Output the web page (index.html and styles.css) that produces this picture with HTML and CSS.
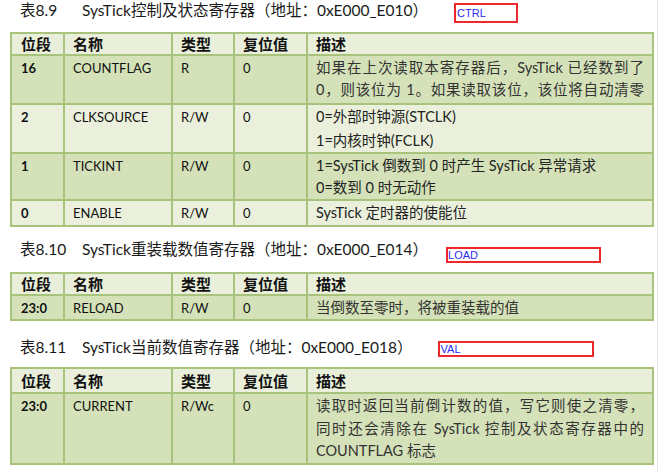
FILE: index.html
```html
<!DOCTYPE html>
<html lang="zh">
<head>
<meta charset="utf-8">
<link rel="stylesheet" href="styles.css">
</head>
<body>
<div class="page">
  <div class="title t1">
    <span class="num">表8.9</span>
    <span class="ttext">SysTick控制及状态寄存器（地址：0xE000_E010）</span>
    <span class="tag tag-ctrl">CTRL</span>
  </div>
  <table class="reg r1">
    <colgroup><col class="c1"><col class="c2"><col class="c3"><col class="c4"><col class="c5"></colgroup>
    <tr class="head"><th>位段</th><th>名称</th><th>类型</th><th>复位值</th><th>描述</th></tr>
    <tr class="dark h48"><td class="bit">16</td><td>COUNTFLAG</td><td>R</td><td>0</td>
      <td class="desc serif"><span class="ln just">如果在上次读取本寄存器后，SysTick 已经数到了</span><span class="ln just">0，则该位为 1。如果读取该位，该位将自动清零</span></td></tr>
    <tr class="light h47"><td class="bit">2</td><td>CLKSOURCE</td><td>R/W</td><td>0</td>
      <td class="desc wide"><span class="ln">0=外部时钟源(STCLK)</span><span class="ln">1=内核时钟(FCLK)</span></td></tr>
    <tr class="dark h49"><td class="bit">1</td><td>TICKINT</td><td>R/W</td><td>0</td>
      <td class="desc"><span class="ln">1=SysTick 倒数到 0 时产生 SysTick 异常请求</span><span class="ln">0=数到 0 时无动作</span></td></tr>
    <tr class="light h26"><td class="bit">0</td><td>ENABLE</td><td>R/W</td><td>0</td>
      <td class="desc"><span class="ln">SysTick 定时器的使能位</span></td></tr>
  </table>

  <div class="title t2">
    <span class="num">表8.10</span>
    <span class="ttext">SysTick重装载数值寄存器（地址：0xE000_E014）</span>
    <span class="tag tag-load">LOAD</span>
  </div>
  <table class="reg r2">
    <colgroup><col class="c1"><col class="c2"><col class="c3"><col class="c4"><col class="c5"></colgroup>
    <tr class="head"><th>位段</th><th>名称</th><th>类型</th><th>复位值</th><th>描述</th></tr>
    <tr class="dark h25"><td class="bit">23:0</td><td>RELOAD</td><td>R/W</td><td>0</td>
      <td class="desc serif"><span class="ln">当倒数至零时，将被重装载的值</span></td></tr>
  </table>

  <div class="title t3">
    <span class="num">表8.11</span>
    <span class="ttext">SysTick当前数值寄存器（地址：0xE000_E018）</span>
    <span class="tag tag-val">VAL</span>
  </div>
  <table class="reg r3">
    <colgroup><col class="c1"><col class="c2"><col class="c3"><col class="c4"><col class="c5"></colgroup>
    <tr class="head"><th>位段</th><th>名称</th><th>类型</th><th>复位值</th><th>描述</th></tr>
    <tr class="dark h72"><td class="bit">23:0</td><td>CURRENT</td><td>R/Wc</td><td>0</td>
      <td class="desc serif tall"><span class="ln just">读取时返回当前倒计数的值，写它则使之清零，</span><span class="ln just">同时还会清除在 SysTick 控制及状态寄存器中的</span><span class="ln">COUNTFLAG 标志</span></td></tr>
  </table>
</div>
</body>
</html>
```
FILE: styles.css
```css
html, body {
  margin: 0;
  padding: 0;
  background: #ffffff;
}
body {
  font-family: "Lato", "Noto Sans CJK SC", sans-serif;
  color: #111;
}
.page {
  width: 647px;
  height: 471px;
  padding-left: 10px;
  border-right: 1px solid #e2e2e2;
  overflow: hidden;
}
.title {
  display: flex;
  align-items: flex-start;
  height: 20px;
  padding-left: 10px;
  font-size: 15.5px;
  line-height: 20px;
  color: #1a1a1a;
  white-space: nowrap;
}
.t1 { margin-top: 0; }
.t2 { margin-top: 12px; }
.t3 { margin-top: 16px; }
.num { width: 62px; flex: none; }
.tag {
  box-sizing: border-box;
  border: 2px solid #ec2a2e;
  font-family: "Liberation Sans", Arial, sans-serif;
  font-size: 11px;
  color: #2b2bf2;
  flex: none;
}
.tag-ctrl {
  width: 64px;
  height: 20px;
  margin-top: 3px;
  margin-left: 26px;
  padding: 1px 0 0 1px;
  line-height: 14px;
}
.tag-load {
  width: 155px;
  height: 16px;
  margin-top: 8px;
  margin-left: 18px;
  line-height: 13px;
}
.tag-val {
  width: 156px;
  height: 16px;
  margin-top: 4px;
  margin-left: 25px;
  line-height: 13px;
  padding-left: 1px;
}
.reg {
  border-collapse: collapse;
  table-layout: fixed;
  width: 642px;
  border: 2px solid #a7c37c;
  font-size: 13px;
}
.r1 { margin-top: 12px; }
.r2 { margin-top: 13px; }
.r3 { margin-top: 10px; }
.c1 { width: 53px; }
.c2 { width: 108px; }
.c3 { width: 62px; }
.c4 { width: 73px; }
.c5 { width: 346px; }
.reg th, .reg td {
  border: 2px solid #a7c37c;
  text-align: left;
  padding: 0 8px;
}
.reg th {
  height: 20px;
  font-family: "Noto Sans CJK SC", sans-serif;
  font-weight: 700;
  font-size: 15px;
  line-height: 20px;
  vertical-align: middle;
  background: #e9efda;
}
.r2 th { height: 20px; }
.r3 th { height: 23px; }
.reg th:first-child, .reg td:first-child { padding-left: 9px; }
.reg td {
  vertical-align: top;
  padding-top: 1px;
  line-height: 22px;
}
.dark td { background: #d5e2b9; }
.light td { background: #eaf0dc; }
.h48 td { height: 46px; }
.h47 td { height: 44px; }
.h49 td { height: 43px; }
.h26 td { height: 23px; }
.h25 td { height: 21px; }
.h72 td { height: 68px; }
.bit { font-weight: 700; }
.desc {
  font-size: 14.5px;
  color: #222;
  white-space: nowrap;
}
.desc.serif { color: #333; font-size: 14.5px; }
.ln { display: block; }
.ln.just { text-align: justify; text-align-last: justify; }
.wide .ln:last-child { margin-top: 2px; }
.tall .ln { line-height: 22.5px; }
```
